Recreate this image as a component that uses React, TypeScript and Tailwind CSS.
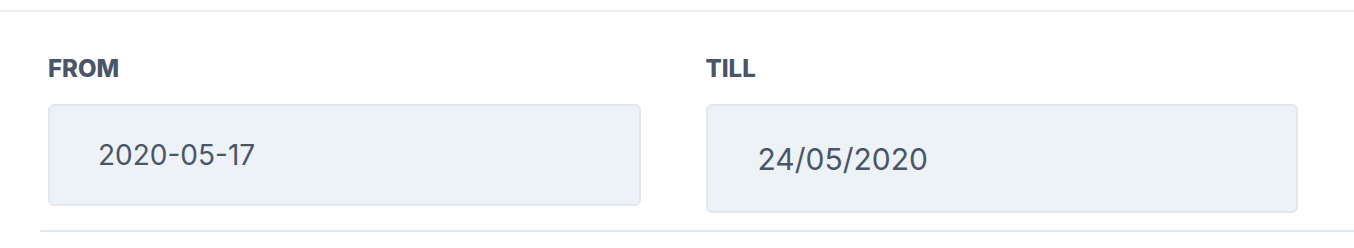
import React from "react";

export default function App() {
  const font = { fontFamily: '"Inter", "Liberation Sans", sans-serif' };
  return (
    <div className="w-[1354px] h-[248px] bg-white" style={font}>
      <div className="mt-[10px] border-t-2 border-[#eeeeee]">
        <div className="ml-[40px] border-b-2 border-[#e2e8f0] pt-[45px] pb-[17px] pl-[8px] pr-[56px] grid grid-cols-2 gap-x-[65px] items-start">
          <div className="flex flex-col">
            <label className="text-[24px] leading-none font-extrabold uppercase text-[#4a5568] mb-[23px]">
              From
            </label>
            <div className="h-[102px] flex items-center pl-[48px] rounded-md border-2 border-[#e2e8f0] bg-[#edf2f7] text-[28px] leading-none text-[#4a5568]">
              2020-05-17
            </div>
          </div>
          <div className="flex flex-col">
            <label className="text-[24px] leading-none font-extrabold uppercase text-[#4a5568] mb-[23px]">
              Till
            </label>
            <div className="h-[109px] flex items-center pl-[50px] rounded-md border-2 border-[#e2e8f0] bg-[#edf2f7] text-[30px] leading-none text-[#4a5568]">
              24/05/2020
            </div>
          </div>
        </div>
      </div>
    </div>
  );
}
